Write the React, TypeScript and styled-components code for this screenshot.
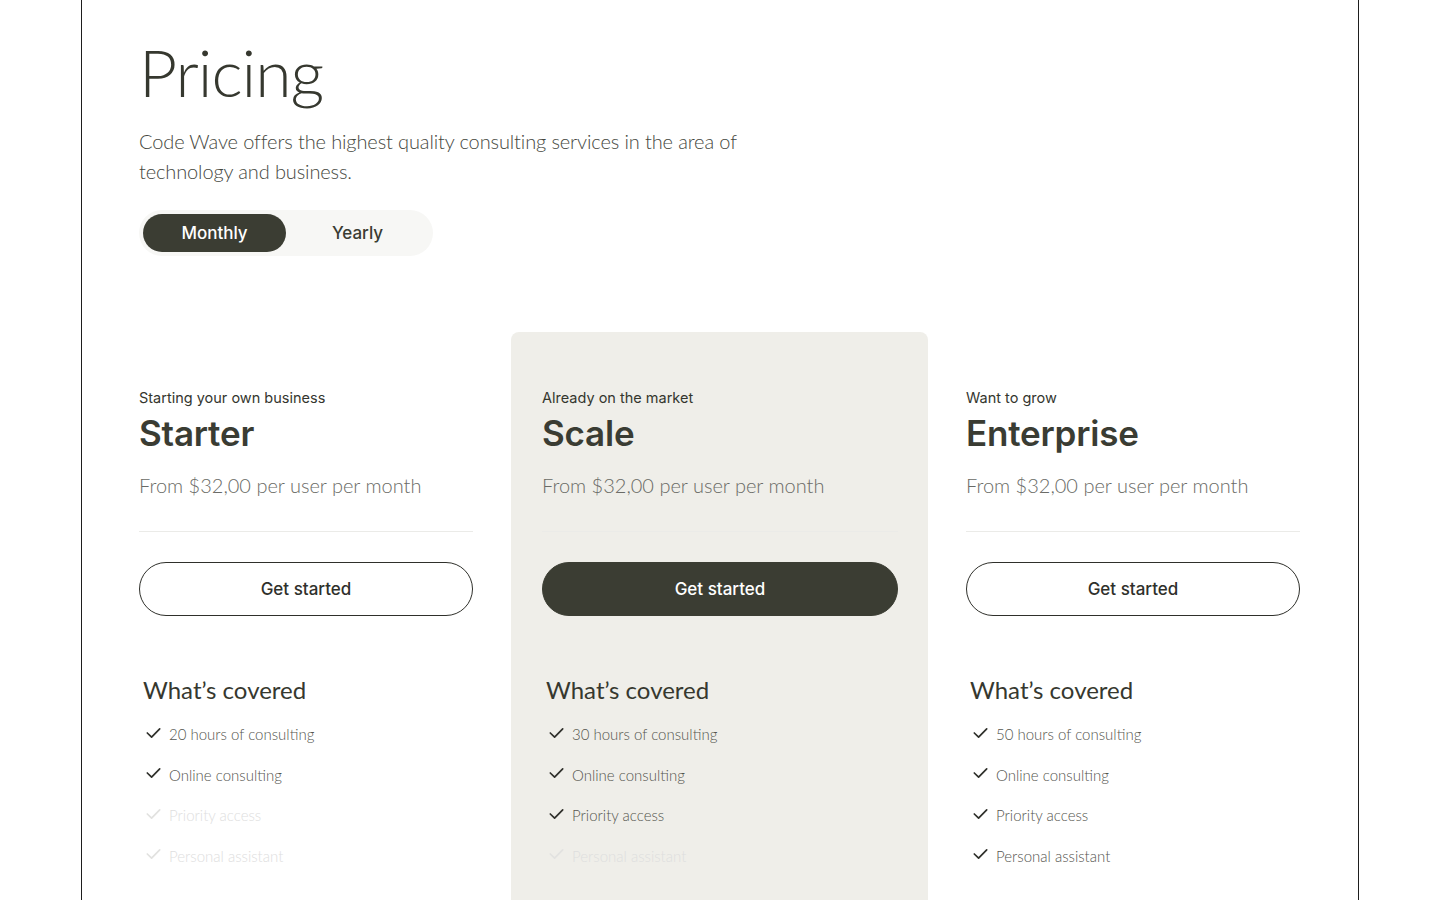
import React, { useState } from "react";
import styled, { createGlobalStyle } from "styled-components";

const Global = createGlobalStyle`
  html, body { margin: 0; padding: 0; background: #ffffff; }
  body { font-family: "Lato", "Inter", sans-serif; color: #3a3c33; }
  * { box-sizing: border-box; }
`;

const Frame = styled.div`
  margin: 0 81px;
  height: 900px;
  overflow: hidden;
  border-left: 1px solid #1e1e1e;
  border-right: 1px solid #1e1e1e;
  padding: 30px 0 0 57px;
`;

const Title = styled.h1`
  margin: 0;
  font-family: "Lato", sans-serif;
  font-weight: 300;
  font-size: 66px;
  line-height: 84px;
  color: #36382f;
  letter-spacing: -1px;
`;

const Lead = styled.p`
  margin: 12px 0 0;
  width: 620px;
  font-family: "Lato", sans-serif;
  font-weight: 300;
  font-size: 20px;
  line-height: 30px;
  letter-spacing: -0.12px;
  color: #45473e;
`;

const Toggle = styled.div`
  margin-top: 24px;
  width: 294px;
  height: 46px;
  padding: 4px;
  border-radius: 23px;
  background: #f7f7f5;
  display: flex;
  align-items: center;
`;

const ToggleOption = styled.button<{ $active?: boolean }>`
  border: none;
  cursor: pointer;
  height: 38px;
  width: 143px;
  border-radius: 19px;
  background: ${(p) => (p.$active ? "#3b3d33" : "transparent")};
  color: ${(p) => (p.$active ? "#ffffff" : "#3a3c33")};
  font-family: "Inter", sans-serif;
  font-weight: 500;
  font-size: 17px;
  padding: 0;
`;

const Plans = styled.div`
  margin-top: 76px;
  display: grid;
  grid-template-columns: 334px 417px 334px;
  column-gap: 38px;
  align-items: start;
`;

const Plan = styled.div<{ $featured?: boolean }>`
  display: flex;
  flex-direction: column;
  padding: ${(p) => (p.$featured ? "56px 30px 60px 31px" : "56px 0 0 0")};
  background: ${(p) => (p.$featured ? "#efeee9" : "transparent")};
  border-radius: ${(p) => (p.$featured ? "8px" : "0")};
  min-height: ${(p) => (p.$featured ? "600px" : "auto")};
`;

const Kicker = styled.div`
  font-family: "Inter", sans-serif;
  font-size: 14.5px;
  line-height: 20px;
  color: #34362e;
`;

const PlanName = styled.h2`
  margin: 4px 0 0;
  font-family: "Inter", sans-serif;
  font-weight: 600;
  font-size: 35px;
  line-height: 42px;
  color: #3a3c33;
  letter-spacing: -0.2px;
`;

const Price = styled.div`
  margin-top: 17px;
  font-family: "Lato", sans-serif;
  font-weight: 300;
  font-size: 20px;
  line-height: 28px;
  color: #6a6b66;
`;

const Divider = styled.hr`
  margin: 32px 0 0;
  border: none;
  border-top: 1px solid #ebebe8;
  width: 100%;
`;

const CTA = styled.button<{ $solid?: boolean }>`
  margin-top: 30px;
  height: 54px;
  width: 100%;
  border-radius: 27px;
  border: 1px solid ${(p) => (p.$solid ? "#3b3d33" : "#2f302b")};
  background: ${(p) => (p.$solid ? "#3b3d33" : "transparent")};
  color: ${(p) => (p.$solid ? "#ffffff" : "#2f302b")};
  font-family: "Inter", sans-serif;
  font-weight: 500;
  font-size: 17px;
  cursor: pointer;
`;

const CoveredTitle = styled.h3`
  margin: 59px 0 0 4px;
  font-family: "Lato", sans-serif;
  font-weight: 400;
  font-size: 24px;
  line-height: 30px;
  color: #36382f;
`;

const FeatureList = styled.ul`
  list-style: none;
  margin: 17px 0 0 7px;
  padding: 0;
  display: flex;
  flex-direction: column;
  gap: 16.6px;
`;

const Feature = styled.li<{ $off?: boolean }>`
  display: flex;
  align-items: center;
  gap: 8px;
  height: 24px;
  font-family: "Lato", sans-serif;
  font-weight: 300;
  font-size: 15px;
  color: ${(p) => (p.$off ? "#dedede" : "#55564f")};
  svg { color: ${(p) => (p.$off ? "#e2e2e0" : "#2f302b")}; flex: none; margin-top: -3px; }
`;

const Check = () => (
  <svg width="15" height="12" viewBox="0 0 15 12" fill="none">
    <path d="M1.3 6 L5.6 10.2 L13.7 1.8" stroke="currentColor" strokeWidth="1.7" strokeLinecap="round" strokeLinejoin="round" />
  </svg>
);

type PlanData = {
  kicker: string;
  name: string;
  featured?: boolean;
  features: { label: string; off?: boolean }[];
};

const plans: PlanData[] = [
  {
    kicker: "Starting your own business",
    name: "Starter",
    features: [
      { label: "20 hours of consulting" },
      { label: "Online consulting" },
      { label: "Priority access", off: true },
      { label: "Personal assistant", off: true },
    ],
  },
  {
    kicker: "Already on the market",
    name: "Scale",
    featured: true,
    features: [
      { label: "30 hours of consulting" },
      { label: "Online consulting" },
      { label: "Priority access" },
      { label: "Personal assistant", off: true },
    ],
  },
  {
    kicker: "Want to grow",
    name: "Enterprise",
    features: [
      { label: "50 hours of consulting" },
      { label: "Online consulting" },
      { label: "Priority access" },
      { label: "Personal assistant" },
    ],
  },
];

export default function App() {
  const [period, setPeriod] = useState<"m" | "y">("m");
  return (
    <>
      <Global />
      <Frame>
        <Title>Pricing</Title>
        <Lead>
          Code Wave offers the highest quality consulting services in the area of technology and business.
        </Lead>
        <Toggle>
          <ToggleOption $active={period === "m"} onClick={() => setPeriod("m")}>Monthly</ToggleOption>
          <ToggleOption $active={period === "y"} onClick={() => setPeriod("y")}>Yearly</ToggleOption>
        </Toggle>
        <Plans>
          {plans.map((p) => (
            <Plan key={p.name} $featured={p.featured}>
              <Kicker>{p.kicker}</Kicker>
              <PlanName>{p.name}</PlanName>
              <Price>From $32,00 per user per month</Price>
              <Divider />
              <CTA $solid={p.featured}>Get started</CTA>
              <CoveredTitle>What’s covered</CoveredTitle>
              <FeatureList>
                {p.features.map((f) => (
                  <Feature key={f.label} $off={f.off}>
                    <Check />
                    {f.label}
                  </Feature>
                ))}
              </FeatureList>
            </Plan>
          ))}
        </Plans>
      </Frame>
    </>
  );
}
